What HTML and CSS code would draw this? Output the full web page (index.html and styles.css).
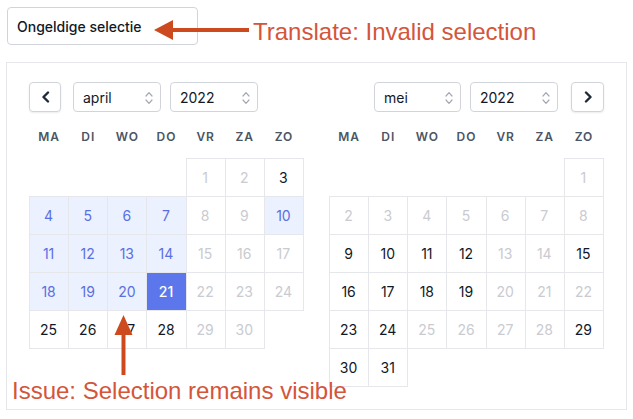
FILE: index.html
```html
<!DOCTYPE html>
<html>
<head>
<meta charset="utf-8">
<link rel="stylesheet" href="styles.css">
</head>
<body>
<div class="input">Ongeldige selectie</div>
<div class="panel">
  <div class="cal">
    <div class="head">
      <button class="nav"><svg width="10" height="12" viewBox="0 0 10 12"><path d="M7 1.5 L2.5 6 L7 10.5" fill="none" stroke="#1f2937" stroke-width="2.4" stroke-linecap="round" stroke-linejoin="round"/></svg></button>
      <div class="sel month">april<svg class="chev" width="8" height="16" viewBox="0 0 8 16"><path d="M1 6 L4 2.7 L7 6 M1 10 L4 13.3 L7 10" fill="none" stroke="#a3a8b3" stroke-width="1.2" stroke-linecap="round" stroke-linejoin="round"/></svg></div>
      <div class="sel year">2022<svg class="chev" width="8" height="16" viewBox="0 0 8 16"><path d="M1 6 L4 2.7 L7 6 M1 10 L4 13.3 L7 10" fill="none" stroke="#a3a8b3" stroke-width="1.2" stroke-linecap="round" stroke-linejoin="round"/></svg></div>
    </div>
    <div class="week"><span>MA</span><span>DI</span><span>WO</span><span>DO</span><span>VR</span><span>ZA</span><span>ZO</span></div>
    <div class="grid">
      <span class="e"></span><span class="e"></span><span class="e"></span><span class="e"></span>
      <span class="d">1</span><span class="d">2</span><span class="n">3</span>
      <span class="r">4</span><span class="r">5</span><span class="r">6</span><span class="r">7</span><span class="d">8</span><span class="d">9</span><span class="r">10</span>
      <span class="r">11</span><span class="r">12</span><span class="r">13</span><span class="r">14</span><span class="d">15</span><span class="d">16</span><span class="d">17</span>
      <span class="r">18</span><span class="r">19</span><span class="r">20</span><span class="a">21</span><span class="d">22</span><span class="d">23</span><span class="d">24</span>
      <span class="n">25</span><span class="n">26</span><span class="n">27</span><span class="n">28</span><span class="d">29</span><span class="d">30</span>
    </div>
  </div>
  <div class="cal">
    <div class="head right">
      <div class="sel month2">mei<svg class="chev" width="8" height="16" viewBox="0 0 8 16"><path d="M1 6 L4 2.7 L7 6 M1 10 L4 13.3 L7 10" fill="none" stroke="#a3a8b3" stroke-width="1.2" stroke-linecap="round" stroke-linejoin="round"/></svg></div>
      <div class="sel year">2022<svg class="chev" width="8" height="16" viewBox="0 0 8 16"><path d="M1 6 L4 2.7 L7 6 M1 10 L4 13.3 L7 10" fill="none" stroke="#a3a8b3" stroke-width="1.2" stroke-linecap="round" stroke-linejoin="round"/></svg></div>
      <button class="nav next"><svg width="10" height="12" viewBox="0 0 10 12"><path d="M3 1.5 L7.5 6 L3 10.5" fill="none" stroke="#1f2937" stroke-width="2.4" stroke-linecap="round" stroke-linejoin="round"/></svg></button>
    </div>
    <div class="week"><span>MA</span><span>DI</span><span>WO</span><span>DO</span><span>VR</span><span>ZA</span><span>ZO</span></div>
    <div class="grid">
      <span class="e"></span><span class="e"></span><span class="e"></span><span class="e"></span><span class="e"></span><span class="e"></span>
      <span class="d">1</span>
      <span class="d">2</span><span class="d">3</span><span class="d">4</span><span class="d">5</span><span class="d">6</span><span class="d">7</span><span class="d">8</span>
      <span class="n">9</span><span class="n">10</span><span class="n">11</span><span class="n">12</span><span class="d">13</span><span class="d">14</span><span class="n">15</span>
      <span class="n">16</span><span class="n">17</span><span class="n">18</span><span class="n">19</span><span class="d">20</span><span class="d">21</span><span class="d">22</span>
      <span class="n">23</span><span class="n">24</span><span class="d">25</span><span class="d">26</span><span class="d">27</span><span class="d">28</span><span class="n">29</span>
      <span class="n">30</span><span class="n">31</span>
    </div>
  </div>
</div>

<svg class="arrow-left" width="100" height="24" viewBox="0 0 100 24"><path d="M18 10 H95 V14 H18 Z" fill="#cc4a1e"/><polygon points="0,12 19,2 19,22" fill="#cc4a1e"/></svg>
<div class="note note-top">Translate: Invalid selection</div>

<svg class="arrow-up" width="20" height="62" viewBox="0 0 20 62"><path d="M7.5 19 H11.5 V60 H7.5 Z" fill="#cc4a1e"/><polygon points="9.5,0 0.5,20 18.5,20" fill="#cc4a1e"/></svg>
<div class="note note-bottom">Issue: Selection remains visible</div>
</body>
</html>
```

FILE: styles.css
```css
* { box-sizing: border-box; }
html, body { margin: 0; background: #fff; }
body {
  padding: 7px 0 0 6px;
  font-family: Inter, "Noto Sans", sans-serif;
  color: #111827;
  position: relative;
  width: 633px;
  height: 419px;
  overflow: hidden;
}
.input {
  margin-left: 1px;
  width: 191px;
  height: 38px;
  border: 1px solid #d1d5db;
  border-radius: 4px;
  padding-left: 9px;
  display: flex;
  align-items: center;
  font-size: 14px;
  font-weight: 500;
  color: #111827;
}
.panel {
  margin-top: 17px;
  width: 621px;
  border: 1px solid #e5e7eb;
  padding: 19px 23px 23px 22px;
  display: flex;
  justify-content: space-between;
  align-items: flex-start;
}
.cal { width: 274px; }
.head {
  display: flex;
  align-items: center;
  height: 30px;
}
.head.right { justify-content: flex-end; width: 275px; }
.nav {
  width: 32px;
  height: 30px;
  border: 1px solid #d1d5db;
  border-radius: 4px;
  background: #fff;
  box-shadow: 0 1px 2px rgba(0,0,0,0.08);
  display: flex;
  align-items: center;
  justify-content: center;
  padding: 0;
  margin: 0;
}
.nav svg { margin-left: 2px; }
.nav.next { width: 33px; margin-left: 13px; }
.nav.next svg { margin-left: 1px; }
.sel {
  height: 30px;
  border: 1px solid #d1d5db;
  border-radius: 4px;
  padding-left: 9px;
  padding-right: 7px;
  display: flex;
  align-items: center;
  justify-content: space-between;
  font-size: 14px;
  color: #111827;
}
.chev { margin-top: 2px; }
.month { width: 88px; margin-left: 12px; }
.year { width: 88px; margin-left: 9px; }
.month2 { width: 87px; }
.week {
  margin-top: 14px;
  display: grid;
  grid-template-columns: repeat(7, 1fr);
  height: 22px;
  line-height: 22px;
  font-size: 12px;
  font-weight: 600;
  letter-spacing: 0.08em;
  color: #4b5563;
  text-align: center;
}
.week span { padding-left: 1px; }
.grid {
  margin-top: 10px;
  display: grid;
  grid-template-columns: repeat(7, 1fr);
  grid-auto-rows: 38px;
  font-size: 14px;
}
.grid span {
  display: flex;
  align-items: center;
  justify-content: center;
  box-shadow: 1px 0 0 0 #e5e7eb, 0 1px 0 0 #e5e7eb, 1px 1px 0 0 #e5e7eb, inset 1px 0 0 0 #e5e7eb, inset 0 1px 0 0 #e5e7eb;
}
.grid span.e { box-shadow: none; }
.n { color: #111827; }
.d { color: #c9cbd1; }
.r { background: #ebf1fe; color: #5a6fe2; }
.a { background: #5c77eb; color: #fff; font-weight: 500; }

.arrow-left { position: absolute; left: 154px; top: 18px; }
.arrow-up { position: absolute; left: 114px; top: 315px; }
.note {
  position: absolute;
  font-family: "Liberation Sans", Arial, sans-serif;
  font-size: 24px;
  line-height: 28px;
  color: #d4553a;
  white-space: nowrap;
}
.note-top { left: 253px; top: 18px; }
.note-bottom { left: 12px; top: 377px; }
```
